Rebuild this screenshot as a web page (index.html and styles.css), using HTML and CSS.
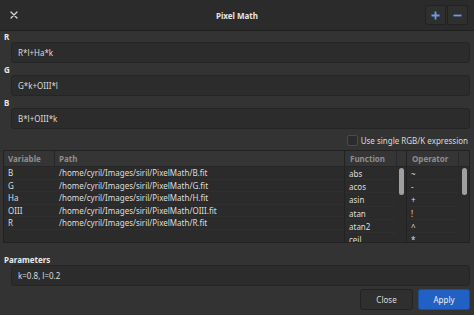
FILE: index.html
```html
<!DOCTYPE html>
<html lang="en">
<head>
  <meta charset="UTF-8">
  <title>Pixel Math</title>
  <link rel="stylesheet" href="styles.css">
</head>
<body>
  <div class="window">
    <div class="headerbar">
      <div class="hb-left">
        <span class="close-x">
          <svg width="8" height="8" viewBox="0 0 8 8"><path d="M1 1L7 7M7 1L1 7" stroke="#d8d8d8" stroke-width="1.3" stroke-linecap="round"/></svg>
        </span>
      </div>
      <div class="title">Pixel Math</div>
      <div class="hb-right">
        <div class="hbtn">
          <svg width="9" height="9" viewBox="0 0 9 9"><path d="M4.5 0.5V8.5M0.5 4.5H8.5" stroke="#6f9be6" stroke-width="1.8"/></svg>
        </div>
        <div class="hbtn">
          <svg width="9" height="9" viewBox="0 0 9 9"><path d="M0.5 4.5H8.5" stroke="#6f9be6" stroke-width="1.8"/></svg>
        </div>
      </div>
    </div>

    <div class="content">
      <div class="label">R</div>
      <div class="entry">R*l+Ha*k</div>
      <div class="label">G</div>
      <div class="entry">G*k+OIII*l</div>
      <div class="label">B</div>
      <div class="entry">B*l+OIII*k</div>

      <div class="check-row">
        <span class="checkbox"></span>
        <span>Use single RGB/K expression</span>
      </div>

      <div class="tables">
        <div class="vars">
          <div class="thead">
            <div class="c-var">Variable</div>
            <div class="c-path">Path</div>
          </div>
          <div class="vrow"><div class="c-var">B</div><div class="c-path">/home/cyril/Images/siril/PixelMath/B.fit</div></div>
          <div class="vrow"><div class="c-var">G</div><div class="c-path">/home/cyril/Images/siril/PixelMath/G.fit</div></div>
          <div class="vrow"><div class="c-var">Ha</div><div class="c-path">/home/cyril/Images/siril/PixelMath/H.fit</div></div>
          <div class="vrow"><div class="c-var">OIII</div><div class="c-path">/home/cyril/Images/siril/PixelMath/OIII.fit</div></div>
          <div class="vrow"><div class="c-var">R</div><div class="c-path">/home/cyril/Images/siril/PixelMath/R.fit</div></div>
        </div>

        <div class="list func">
          <div class="thead">
            <div class="l-name">Function</div>
            <div class="l-sb"></div>
          </div>
          <div class="l-body">
            <div class="l-items">
              <div class="lrow">abs</div>
              <div class="lrow">acos</div>
              <div class="lrow">asin</div>
              <div class="lrow">atan</div>
              <div class="lrow">atan2</div>
              <div class="lrow">ceil</div>
            </div>
            <div class="l-sb"><div class="thumb"></div></div>
          </div>
        </div>

        <div class="list oper">
          <div class="thead">
            <div class="l-name">Operator</div>
            <div class="l-sb"></div>
          </div>
          <div class="l-body">
            <div class="l-items">
              <div class="lrow">~</div>
              <div class="lrow">-</div>
              <div class="lrow">+</div>
              <div class="lrow">!</div>
              <div class="lrow">^</div>
              <div class="lrow">*</div>
            </div>
            <div class="l-sb"><div class="thumb"></div></div>
          </div>
        </div>
      </div>

      <div class="label params-label">Parameters</div>
      <div class="entry">k=0.8, l=0.2</div>

      <div class="actions">
        <div class="btn">Close</div>
        <div class="btn primary">Apply</div>
      </div>
    </div>
  </div>
</body>
</html>
```

FILE: styles.css
```css
* {
  margin: 0;
  padding: 0;
  box-sizing: border-box;
}

body {
  background: #333333;
  font-family: 'Noto Sans', sans-serif;
  font-size: 8px;
  color: #dedede;
}

.window {
  width: 474px;
  height: 315px;
  display: flex;
  flex-direction: column;
  background: #333333;
  overflow: hidden;
}

/* header bar */
.headerbar {
  height: 31px;
  background: #2b2b2b;
  border-bottom: 1px solid #1f1f1f;
  display: grid;
  grid-template-columns: 1fr auto 1fr;
  align-items: center;
}

.hb-left {
  padding-left: 10px;
  display: flex;
}

.close-x {
  display: flex;
}

.title {
  font-weight: bold;
  color: #e6e6e6;
  font-size: 8px;
}

.hb-right {
  display: flex;
  justify-content: flex-end;
  padding-right: 6px;
  gap: 1px;
}

.hbtn {
  width: 21px;
  height: 20px;
  background: #2f2f2f;
  border: 1px solid #222;
  display: flex;
  align-items: center;
  justify-content: center;
}

.hbtn:first-child {
  border-radius: 3px 0 0 3px;
}

.hbtn:last-child {
  border-radius: 0 3px 3px 0;
}

/* content */
.content {
  flex: 1;
  display: flex;
  flex-direction: column;
  padding: 0 4px 4px 4px;
}

.label {
  height: 11px;
  line-height: 11px;
  font-weight: bold;
  color: #e8e8e8;
}

.entry {
  height: 21px;
  margin: 0 0 1px 7px;
  background: #2c2c2c;
  border: 1px solid #252525;
  border-radius: 3px;
  padding-left: 6px;
  line-height: 19px;
  color: #dcdcdc;
}

.check-row {
  height: 18px;
  display: flex;
  align-items: center;
  justify-content: flex-end;
  padding-right: 2px;
  margin-top: 1px;
  color: #dadada;
}

.checkbox {
  width: 11px;
  height: 11px;
  border: 1px solid #4a4a4a;
  background: #2b2b2b;
  border-radius: 2px;
  margin-right: 3px;
}

/* tree views */
.tables {
  height: 93px;
  margin-left: -1px;
  margin-top: 1px;
  border: 1px solid #222;
  background: #2b2b2b;
  display: flex;
  overflow: hidden;
}

.thead {
  height: 16px;
  display: flex;
  background: #353535;
  border-bottom: 1px solid #262626;
  color: #8e8e8e;
  font-weight: bold;
  line-height: 15px;
}

.vars {
  width: 341px;
  border-right: 1px solid #222;
}

.c-var {
  width: 51px;
  padding-left: 4px;
  flex-shrink: 0;
}

.thead .c-var {
  border-right: 1px solid #262626;
}

.c-path {
  padding-left: 4px;
}

.vrow {
  height: 12.6px;
  line-height: 12.6px;
  display: flex;
  border-bottom: 1px solid #2f2f2f;
}

.list {
  display: flex;
  flex-direction: column;
}

.func {
  width: 62px;
  border-right: 1px solid #222;
}

.oper {
  flex: 1;
}

.l-name {
  flex: 1;
  padding-left: 5px;
  border-right: 1px solid #2a2a2a;
}

.l-sb {
  width: 9px;
  flex-shrink: 0;
}

.oper .l-sb {
  width: 10px;
}

.l-body {
  flex: 1;
  display: flex;
}

.l-items {
  flex: 1;
  border-right: 1px solid #2a2a2a;
}

.lrow {
  height: 13.2px;
  line-height: 13.2px;
  padding-left: 4px;
  border-bottom: 1px solid #2f2f2f;
}

.thumb {
  width: 5px;
  height: 27px;
  margin: 1px auto 0 auto;
  background: #a0a0a0;
  border-radius: 3px;
}

.params-label {
  margin-top: 11px;
}

/* dialog buttons */
.actions {
  margin-top: 2px;
  display: flex;
  justify-content: flex-end;
  gap: 5px;
}

.btn {
  width: 53px;
  height: 21px;
  line-height: 19px;
  text-align: center;
  background: #2f2f2f;
  border: 1px solid #222;
  border-radius: 3px;
  color: #dcdcdc;
}

.btn.primary {
  width: 52px;
  background: #2261c4;
  border-color: #1a4f9f;
  color: #f0f0f0;
}
```
